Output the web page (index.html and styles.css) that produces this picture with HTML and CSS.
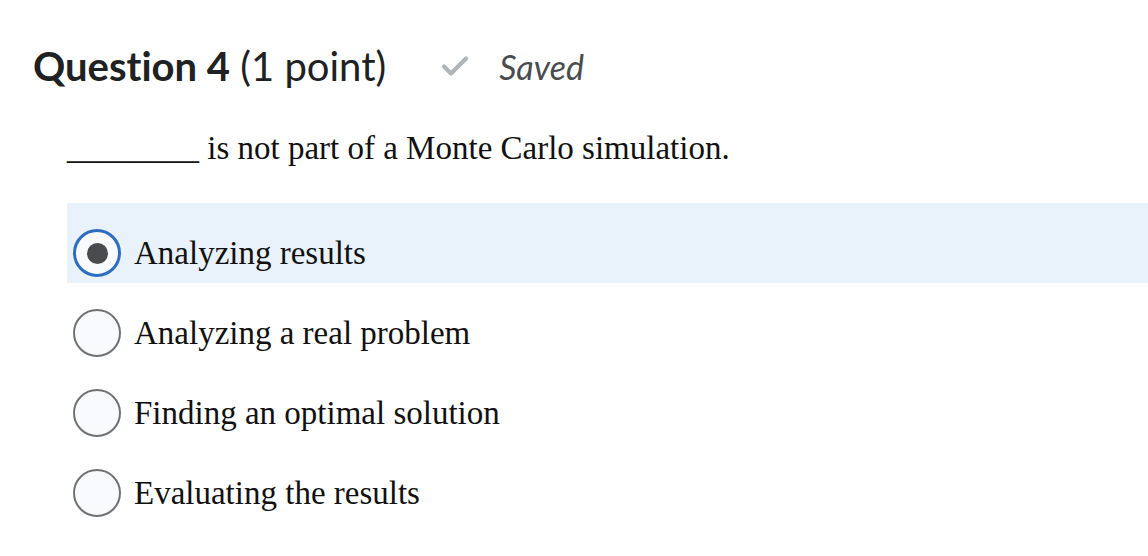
FILE: index.html
```html
<!DOCTYPE html>
<html>
<head>
<meta charset="utf-8">
<link rel="stylesheet" href="styles.css">
</head>
<body>
<div class="page">
  <div class="qhead">
    <h2 class="qtitle"><strong>Question 4</strong> (1 point)</h2>
    <span class="saved">
      <svg class="check" width="30" height="24" viewBox="0 0 30 24"><path d="M4 12.5 L11 19.5 L26 4.5" fill="none" stroke="#b1b5b8" stroke-width="4.2" stroke-linecap="round" stroke-linejoin="round"/></svg>
      <em>Saved</em>
    </span>
  </div>
  <p class="qtext">________ is not part of a Monte Carlo simulation.</p>
  <div class="options">
    <label class="opt selected"><span class="radio"><span class="dot"></span></span><span class="otext">Analyzing results</span></label>
    <label class="opt"><span class="radio"></span><span class="otext">Analyzing a real problem</span></label>
    <label class="opt"><span class="radio"></span><span class="otext">Finding an optimal solution</span></label>
    <label class="opt"><span class="radio"></span><span class="otext">Evaluating the results</span></label>
  </div>
</div>
</body>
</html>
```
FILE: styles.css
```css
html, body { margin: 0; padding: 0; background: #fff; }
.page { padding: 0 0 0 33px; }
.qhead { display: flex; align-items: center; height: 132px; font-variant-ligatures: none; }
.qtitle { margin: 0; font-family: Lato, "Liberation Sans", sans-serif; font-weight: 400; font-size: 40px; color: #202122; letter-spacing: 0; }
.qtitle strong { font-weight: 700; }
.saved { display: flex; align-items: center; margin-left: 54px; font-family: Lato, sans-serif; font-size: 34px; color: #494c4e; }
.check { margin-right: 29px; }
.saved em { font-style: italic; }
.qtext { margin: 0 0 39px 34px; font-family: "Liberation Serif", serif; font-size: 33px; color: #111; line-height: 32px; }
.options { margin-left: 34px; display: flex; flex-direction: column; }
.opt { box-sizing: border-box; display: flex; align-items: center; height: 80px; padding-top: 20px; font-family: "Liberation Serif", serif; font-size: 33px; color: #111; }
.opt.selected { background: #e9f1fb; }
.radio { box-sizing: border-box; flex: none; width: 48px; height: 48px; border-radius: 50%; border: 2px solid #6f7173; background: #f9fafe; margin-left: 6px; margin-right: 13px; display: flex; align-items: center; justify-content: center; }
.selected .radio { border: 3px solid #2e6dbf; background: #f9fafe; }
.dot { width: 21px; height: 21px; border-radius: 50%; background: #4a4b4d; }
```
